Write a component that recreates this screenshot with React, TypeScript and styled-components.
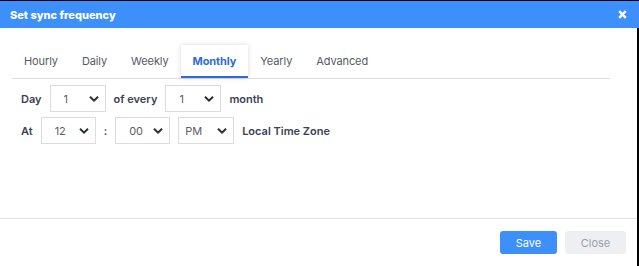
import React, { useState } from "react";
import styled, { createGlobalStyle } from "styled-components";

const GlobalStyle = createGlobalStyle`
  html, body {
    margin: 0;
    padding: 0;
    background: #000;
  }
  body {
    font-family: Inter, "Open Sans", sans-serif;
  }
`;

const Frame = styled.div`
  width: 639px;
  height: 266px;
  padding-top: 1px;
  box-sizing: border-box;
  background: #000;
  display: flex;
  flex-direction: column;
  overflow: hidden;
`;

const Header = styled.div`
  height: 27px;
  background: #3d8ffb;
  display: flex;
  align-items: center;
  justify-content: space-between;
  padding: 0 12px 0 10px;
  color: #fff;
  flex-shrink: 0;
`;

const Title = styled.div`
  font-size: 11px;
  font-weight: 800;
`;

const CloseX = styled.button`
  border: 0;
  background: none;
  padding: 0;
  display: flex;
  color: #fff;
  cursor: pointer;
`;

const Body = styled.div`
  flex: 1;
  margin-right: 2px;
  background: #fff;
  display: flex;
  flex-direction: column;
`;

const Content = styled.div`
  flex: 1;
  padding: 17px 27px 0 12px;
`;

const TabBar = styled.div`
  display: flex;
  border-bottom: 1px solid #dedede;
`;

const Tab = styled.div<{ active?: boolean }>`
  height: 31px;
  padding: 0 12px;
  display: flex;
  align-items: center;
  font-size: 11px;
  letter-spacing: -0.1px;
  font-weight: ${({ active }) => (active ? 700 : 400)};
  color: ${({ active }) => (active ? "#2f6bd8" : "#555a63")};
  border-bottom: 2px solid ${({ active }) => (active ? "#2f6bd8" : "transparent")};
  box-shadow: ${({ active }) => (active ? "0 0 5px rgba(0,0,0,0.15)" : "none")};
  cursor: pointer;
`;

const Form = styled.div`
  padding: 6px 0 0 9px;
  display: flex;
  flex-direction: column;
  gap: 5px;
`;

const Row = styled.div`
  display: flex;
  align-items: center;
  gap: 8px;
`;

const Label = styled.span`
  font-size: 11px;
  font-weight: 600;
  color: #3b4256;
`;

const SelectWrap = styled.div<{ w: number }>`
  position: relative;
  width: ${({ w }) => w}px;
  height: 27px;
`;

const Select = styled.select<{ pad: number }>`
  appearance: none;
  width: 100%;
  height: 100%;
  border: 1px solid #dcdcdc;
  border-radius: 0;
  background: #fff;
  font-family: inherit;
  font-size: 11px;
  color: #5c6068;
  padding: 0 0 0 ${({ pad }) => pad}px;
  outline: none;
`;

const Chevron = styled.svg`
  position: absolute;
  right: 7px;
  top: 50%;
  transform: translateY(-50%);
  pointer-events: none;
`;

const Footer = styled.div`
  height: 48px;
  box-sizing: border-box;
  border-top: 1px solid #e3e3e3;
  display: flex;
  align-items: center;
  justify-content: flex-end;
  gap: 8px;
  padding-right: 11px;
  flex-shrink: 0;
`;

const Button = styled.button<{ primary?: boolean }>`
  height: 23px;
  border: 0;
  border-radius: 3px;
  font-family: inherit;
  font-size: 11px;
  width: ${({ primary }) => (primary ? 57 : 61)}px;
  background: ${({ primary }) => (primary ? "#3d8ffb" : "#edeff3")};
  color: ${({ primary }) => (primary ? "#fff" : "#9a9fa9")};
  cursor: pointer;
`;

function Dropdown(props: { value: string; options: string[]; width: number; pad?: number }) {
  const [value, setValue] = useState(props.value);
  return (
    <SelectWrap w={props.width}>
      <Select pad={props.pad ?? 13} value={value} onChange={(e) => setValue(e.target.value)}>
        {props.options.map((o) => (
          <option key={o} value={o}>
            {o}
          </option>
        ))}
      </Select>
      <Chevron width="10" height="7" viewBox="0 0 10 7">
        <path d="M1 1.2 L5 5.2 L9 1.2" stroke="#2a2f3a" strokeWidth="2" fill="none" />
      </Chevron>
    </SelectWrap>
  );
}

const range = (from: number, to: number, pad = false) =>
  Array.from({ length: to - from + 1 }, (_, i) => {
    const n = String(from + i);
    return pad && n.length < 2 ? "0" + n : n;
  });

const tabs = ["Hourly", "Daily", "Weekly", "Monthly", "Yearly", "Advanced"];

export default function App() {
  const [activeTab, setActiveTab] = useState("Monthly");

  return (
    <Frame>
      <GlobalStyle />
      <Header>
        <Title>Set sync frequency</Title>
        <CloseX>
          <svg width="9" height="9" viewBox="0 0 9 9">
            <path d="M1.2 1.2 L7.8 7.8 M7.8 1.2 L1.2 7.8" stroke="#fff" strokeWidth="2.4" />
          </svg>
        </CloseX>
      </Header>
      <Body>
        <Content>
          <TabBar>
            {tabs.map((t) => (
              <Tab key={t} active={t === activeTab} onClick={() => setActiveTab(t)}>
                {t}
              </Tab>
            ))}
          </TabBar>
          <Form>
            <Row>
              <Label>Day</Label>
              <Dropdown value="1" options={range(1, 31)} width={56} />
              <Label>of every</Label>
              <Dropdown value="1" options={range(1, 12)} width={56} />
              <Label>month</Label>
            </Row>
            <Row>
              <Label>At</Label>
              <Dropdown value="12" options={range(1, 12)} width={55} />
              <Label>:</Label>
              <Dropdown value="00" options={range(0, 59, true)} width={55} />
              <Dropdown value="PM" options={["AM", "PM"]} width={56} pad={6} />
              <Label>Local Time Zone</Label>
            </Row>
          </Form>
        </Content>
        <Footer>
          <Button primary>Save</Button>
          <Button>Close</Button>
        </Footer>
      </Body>
    </Frame>
  );
}
